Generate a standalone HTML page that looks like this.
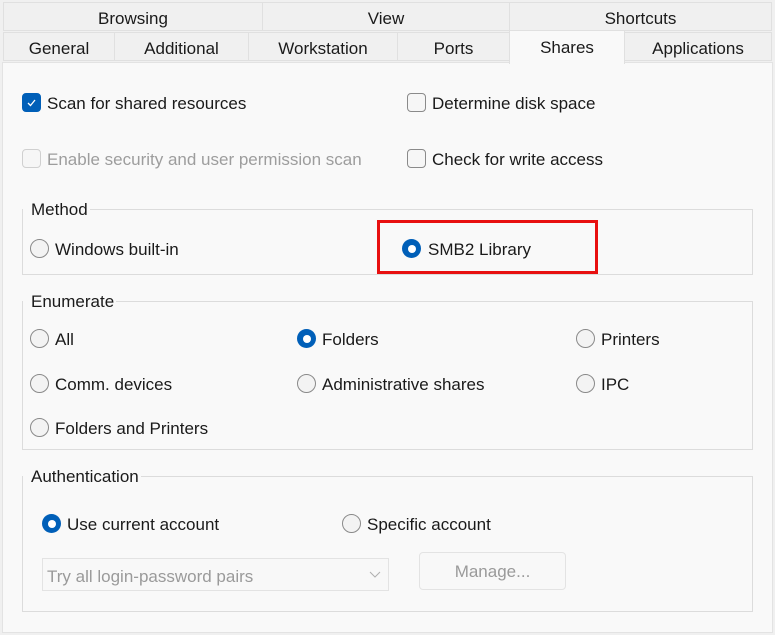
<!DOCTYPE html>
<html><head><style>
body{margin:0;width:775px;height:635px;background:#f0f0f0;position:relative;overflow:hidden;font-family:"Segoe UI","Liberation Sans",sans-serif;font-size:17px;color:#1a1a1a}
.a{position:absolute}
.tab{position:absolute;height:29px;line-height:31px;text-align:center;background:#f0f0f0;border:1px solid #e0e0e0;box-sizing:border-box}
.t{position:absolute;line-height:20px;white-space:nowrap;margin-top:1px}
.cb{position:absolute;width:19px;height:19px;border:1px solid #8a8a8a;border-radius:4px;box-sizing:border-box;background:#f6f6f6}
.r{position:absolute;width:19px;height:19px;border:1px solid #8a8a8a;border-radius:50%;box-sizing:border-box;background:#f3f3f3}
.rs{position:absolute;width:19px;height:19px;border-radius:50%;background:#005fb8;box-sizing:border-box}
.rs:after{content:"";position:absolute;left:5.5px;top:5.5px;width:8px;height:8px;border-radius:50%;background:#fff}
.box{position:absolute;border:1px solid #dcdcdc;box-sizing:border-box}
.lbl{position:absolute;background:#f9f9f9;padding:0 2px 0 8px;line-height:20px;margin-top:1px}
</style></head><body>
<div class="tab" style="left:3px;top:2px;width:260px">Browsing</div>
<div class="tab" style="left:262px;top:2px;width:248px">View</div>
<div class="tab" style="left:509px;top:2px;width:263px">Shortcuts</div>
<div class="tab" style="left:3px;top:32px;width:112px">General</div>
<div class="tab" style="left:114px;top:32px;width:135px">Additional</div>
<div class="tab" style="left:248px;top:32px;width:150px">Workstation</div>
<div class="tab" style="left:397px;top:32px;width:113px">Ports</div>
<div class="tab" style="left:624px;top:32px;width:148px">Applications</div>
<div class="a" style="left:2px;top:62px;width:771px;height:571px;background:#f9f9f9;border:1px solid #e3e3e3;box-sizing:border-box"></div>
<div class="tab" style="left:509px;top:30px;width:116px;height:34px;line-height:33px;background:#f9f9f9;border-bottom:none">Shares</div>

<div class="cb" style="left:22px;top:93px;background:#005fb8;border-color:#005fb8"><svg width="19" height="19" style="position:absolute;left:-1px;top:-1px"><path d="M6 10 L8.5 12.5 L13 7" stroke="#fff" stroke-width="1.3" fill="none"/></svg></div>
<div class="t" style="left:47px;top:93px">Scan for shared resources</div>
<div class="cb" style="left:407px;top:93px"></div>
<div class="t" style="left:432px;top:93px">Determine disk space</div>
<div class="cb" style="left:22px;top:149px;border-color:#d0d0d0"></div>
<div class="t" style="left:47px;top:149px;color:#9d9d9d">Enable security and user permission scan</div>
<div class="cb" style="left:407px;top:149px"></div>
<div class="t" style="left:432px;top:149px">Check for write access</div>

<div class="box" style="left:22px;top:209px;width:731px;height:66px"></div>
<div class="lbl" style="left:23px;top:199px">Method</div>
<div class="r" style="left:30px;top:239px"></div><div class="t" style="left:55px;top:239px">Windows built-in</div>
<div class="rs" style="left:402px;top:239px"></div><div class="t" style="left:428px;top:239px">SMB2 Library</div>
<div class="a" style="left:377px;top:220px;width:221px;height:54px;border:3px solid #e81010;box-sizing:border-box"></div>

<div class="box" style="left:22px;top:301px;width:731px;height:149px"></div>
<div class="lbl" style="left:23px;top:291px">Enumerate</div>
<div class="r" style="left:30px;top:329px"></div><div class="t" style="left:55px;top:329px">All</div>
<div class="rs" style="left:297px;top:329px"></div><div class="t" style="left:322px;top:329px">Folders</div>
<div class="r" style="left:576px;top:329px"></div><div class="t" style="left:601px;top:329px">Printers</div>
<div class="r" style="left:30px;top:374px"></div><div class="t" style="left:55px;top:374px">Comm. devices</div>
<div class="r" style="left:297px;top:374px"></div><div class="t" style="left:322px;top:374px">Administrative shares</div>
<div class="r" style="left:576px;top:374px"></div><div class="t" style="left:601px;top:374px">IPC</div>
<div class="r" style="left:30px;top:418px"></div><div class="t" style="left:55px;top:418px">Folders and Printers</div>

<div class="box" style="left:22px;top:476px;width:731px;height:136px"></div>
<div class="lbl" style="left:23px;top:466px">Authentication</div>
<div class="rs" style="left:42px;top:514px"></div><div class="t" style="left:67px;top:514px">Use current account</div>
<div class="r" style="left:342px;top:514px"></div><div class="t" style="left:367px;top:514px">Specific account</div>
<div class="a" style="left:42px;top:558px;width:347px;height:33px;border:1px solid #e3e3e3;box-sizing:border-box;background:#f8f8f8"></div>
<div class="t" style="left:47px;top:566px;color:#9a9a9a">Try all login-password pairs</div>
<svg class="a" style="left:368px;top:569px" width="14" height="10"><path d="M2 3 L7 8 L12 3" stroke="#b0b0b0" stroke-width="1" fill="none"/></svg>
<div class="a" style="left:419px;top:552px;width:147px;height:38px;border:1px solid #e3e3e3;border-radius:4px;box-sizing:border-box;background:#f8f8f8;text-align:center;line-height:38px;color:#9a9a9a">Manage...</div>
</body></html>
